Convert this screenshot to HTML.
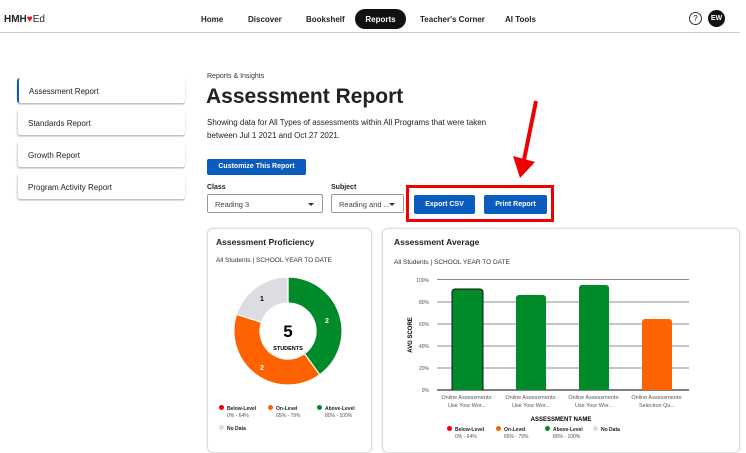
<!DOCTYPE html><html><head><style>
*{margin:0;padding:0;box-sizing:border-box}
body{width:746px;height:444px;overflow:hidden;background:#fff;font-family:"Liberation Sans",sans-serif;color:#222;position:relative}
.a{position:absolute}
.nav{font-size:8px;font-weight:bold;top:15px}
.side{position:absolute;left:17px;width:168px;height:25px;border-radius:3px;box-shadow:0 1.5px 1.5px #bbb;border-left:1px solid #ddd;font-size:8px;padding:9px 0 0 10px}
.btn{position:absolute;background:#0b5cbf;color:#fff;font-size:7px;font-weight:bold;text-align:center;border-radius:2px}
.sel{position:absolute;border:1px solid #999;border-radius:2px;height:19px;font-size:7.5px;color:#444;padding:5px 0 0 7px}
.sel:after{content:"";position:absolute;right:8px;top:8px;border:3px solid transparent;border-top:3px solid #333}
.card{position:absolute;border:1px solid #ddd;border-radius:6px;box-shadow:0 0 2px #ddd}
.s{font-size:6.5px;color:#333}
.t{font-size:5px;color:#555}
.d{display:inline-block;width:5px;height:5px;border-radius:50%;margin-right:3px}
</style></head><body>
<div class="a" style="left:4px;top:14px;font-size:10px;font-weight:bold">HMH<span style="color:#e0101a">&#9829;</span><span style="font-weight:normal">Ed</span></div>
<div class="a nav" style="left:201px">Home</div>
<div class="a nav" style="left:248px">Discover</div>
<div class="a nav" style="left:306px">Bookshelf</div>
<div class="a" style="left:355px;top:9px;width:51px;height:20px;background:#111;border-radius:10px;color:#fff;font-size:8px;font-weight:bold;text-align:center;padding-top:6px">Reports</div>
<div class="a nav" style="left:420px">Teacher's Corner</div>
<div class="a nav" style="left:505px">AI Tools</div>
<div class="a" style="left:689px;top:12px;width:13px;height:13px;border:1px solid #333;border-radius:50%;font-size:8px;text-align:center;line-height:11px">?</div>
<div class="a" style="left:708px;top:10px;width:17px;height:17px;background:#111;border-radius:50%;color:#fff;font-size:7px;font-weight:bold;text-align:center;line-height:17px">EW</div>
<div class="a" style="left:0;top:32px;width:740px;height:1px;background:#ccc"></div>

<div class="side" style="top:78px;border-left:2px solid #0b5cbf">Assessment Report</div>
<div class="side" style="top:110px">Standards Report</div>
<div class="side" style="top:142px">Growth Report</div>
<div class="side" style="top:174px">Program Activity Report</div>

<div class="a" style="left:207px;top:73px;font-size:7px;color:#333">Reports &amp; Insights</div>
<div class="a" style="left:206px;top:85px;font-size:21px;font-weight:bold">Assessment Report</div>
<div class="a" style="left:207px;top:116px;font-size:8px;line-height:13px;width:310px">Showing data for All Types of assessments within All Programs that were taken between Jul 1 2021 and Oct 27 2021.</div>
<div class="btn" style="left:207px;top:159px;width:99px;height:16px;line-height:16px">Customize This Report</div>
<div class="a" style="left:207px;top:184px;font-size:7px;font-weight:bold">Class</div>
<div class="a" style="left:331px;top:184px;font-size:7px;font-weight:bold">Subject</div>
<div class="sel" style="left:207px;top:194px;width:116px">Reading 3</div>
<div class="sel" style="left:331px;top:194px;width:73px">Reading and ...</div>
<div class="a" style="left:406px;top:185px;width:148px;height:37px;border:3px solid #ee0000"></div>
<div class="btn" style="left:414px;top:195px;width:61px;height:19px;line-height:19px">Export CSV</div>
<div class="btn" style="left:484px;top:195px;width:63px;height:19px;line-height:19px">Print Report</div>
<svg class="a" style="left:0;top:0" width="746" height="444"><line x1="536" y1="101" x2="524" y2="160" stroke="#ee0000" stroke-width="4"/><polygon points="513,156 535,162 520,178" fill="#ee0000"/></svg>

<div class="card" style="left:207px;top:228px;width:165px;height:225px"></div>
<div class="a" style="left:216px;top:237px;font-size:8.5px;font-weight:bold">Assessment Proficiency</div>
<div class="a s" style="left:216px;top:257px">All Students | SCHOOL YEAR TO DATE</div>
<svg class="a" style="left:0;top:0" width="746" height="444">
<g transform="translate(288,331)" stroke="#fff" stroke-width="1.2">
<path d="M0,-54A54,54 0 0 1 31.7,43.7L16.5,22.7A28,28 0 0 0 0,-28Z" fill="#008a29"/>
<path d="M31.7,43.7A54,54 0 0 1 -51.4,-16.7L-26.6,-8.7A28,28 0 0 0 16.5,22.7Z" fill="#ff6200"/>
<path d="M-51.4,-16.7A54,54 0 0 1 0,-54L0,-28A28,28 0 0 0 -26.6,-8.7Z" fill="#dcdde2"/>
</g>
<g font-family="Liberation Sans" font-weight="bold" text-anchor="middle">
<text x="288" y="337" font-size="17">5</text>
<text x="288" y="350" font-size="5.5">STUDENTS</text>
<text x="262" y="301" font-size="7">1</text>
<text x="327" y="323" font-size="7" fill="#fff">2</text>
<text x="262" y="370" font-size="7" fill="#fff">2</text>
</g></svg>
<div class="a" style="left:219px;top:405px;font-size:5px;font-weight:bold"><span class="d" style="background:#e00"></span>Below-Level</div>
<div class="a t" style="left:227px;top:413px">0% - 64%</div>
<div class="a" style="left:268px;top:405px;font-size:5px;font-weight:bold"><span class="d" style="background:#ff6200"></span>On-Level</div>
<div class="a t" style="left:276px;top:413px">65% - 79%</div>
<div class="a" style="left:317px;top:405px;font-size:5px;font-weight:bold"><span class="d" style="background:#008a29"></span>Above-Level</div>
<div class="a t" style="left:325px;top:413px">80% - 100%</div>
<div class="a" style="left:219px;top:425px;font-size:5px;font-weight:bold"><span class="d" style="background:#dcdde2"></span>No Data</div>

<div class="card" style="left:382px;top:228px;width:358px;height:225px"></div>
<div class="a" style="left:394px;top:237px;font-size:8.5px;font-weight:bold">Assessment Average</div>
<div class="a s" style="left:394px;top:259px">All Students | SCHOOL YEAR TO DATE</div>
<svg class="a" style="left:0;top:0" width="746" height="444" font-family="Liberation Sans">
<g stroke="#666" stroke-width="0.8"><line x1="437" y1="279.5" x2="689" y2="279.5"/><line x1="437" y1="302" x2="689" y2="302"/><line x1="437" y1="324" x2="689" y2="324"/><line x1="437" y1="346" x2="689" y2="346"/><line x1="437" y1="368" x2="689" y2="368"/></g>
<line x1="437" y1="390" x2="689" y2="390" stroke="#333" stroke-width="1.2"/>
<g font-size="5" fill="#555" text-anchor="end"><text x="429" y="282">100%</text><text x="429" y="304">80%</text><text x="429" y="326">60%</text><text x="429" y="348">40%</text><text x="429" y="370">20%</text><text x="429" y="392">0%</text></g>
<text transform="translate(412,335) rotate(-90)" font-size="6" font-weight="bold" text-anchor="middle">AVG SCORE</text>
<path d="M452,390V292a3,3 0 0 1 3,-3h25a3,3 0 0 1 3,3V390" fill="#008a29" stroke="#111" stroke-width="1"/>
<path d="M516,390V298a3,3 0 0 1 3,-3h24a3,3 0 0 1 3,3V390" fill="#008a29"/>
<path d="M579,390V288a3,3 0 0 1 3,-3h24a3,3 0 0 1 3,3V390" fill="#008a29"/>
<path d="M642,390V322a3,3 0 0 1 3,-3h24a3,3 0 0 1 3,3V390" fill="#ff6200"/>
<g font-size="5.5" fill="#555" text-anchor="middle"><text x="467" y="399">Online Assessments:</text><text x="467" y="407">Use Your Wor...</text><text x="531" y="399">Online Assessments:</text><text x="531" y="407">Use Your Wor...</text><text x="594" y="399">Online Assessments:</text><text x="594" y="407">Use Your Wor...</text><text x="657" y="399">Online Assessments:</text><text x="657" y="407">Selection Qu...</text></g>
<text x="561" y="421" font-size="6" font-weight="bold" text-anchor="middle">ASSESSMENT NAME</text>
</svg>
<div class="a" style="left:447px;top:426px;font-size:5px;font-weight:bold"><span class="d" style="background:#e00"></span>Below-Level</div>
<div class="a t" style="left:455px;top:434px">0% - 64%</div>
<div class="a" style="left:496px;top:426px;font-size:5px;font-weight:bold"><span class="d" style="background:#ff6200"></span>On-Level</div>
<div class="a t" style="left:504px;top:434px">65% - 79%</div>
<div class="a" style="left:545px;top:426px;font-size:5px;font-weight:bold"><span class="d" style="background:#008a29"></span>Above-Level</div>
<div class="a t" style="left:553px;top:434px">80% - 100%</div>
<div class="a" style="left:593px;top:426px;font-size:5px;font-weight:bold"><span class="d" style="background:#dcdde2"></span>No Data</div>
</body></html>
